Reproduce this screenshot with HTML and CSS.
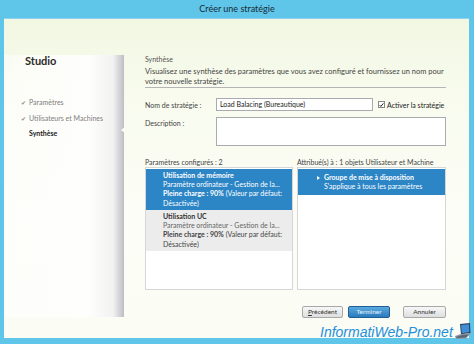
FILE: index.html
```html
<!DOCTYPE html>
<html lang="fr">
<head>
<meta charset="utf-8">
<title>Créer une stratégie</title>
<link rel="stylesheet" href="styles.css">
</head>
<body>
<div class="window">
  <div class="titlebar">Créer une stratégie</div>
  <div class="client">
    <aside class="sidebar">
      <div class="brand">Studio</div>
      <ul class="steps">
        <li class="step done"><span class="tick">✔</span>Paramètres</li>
        <li class="step done"><span class="tick">✔</span>Utilisateurs et Machines</li>
        <li class="step current">Synthèse</li>
      </ul>
    </aside>
    <main class="pane">
      <span class="notch"></span>
      <h1 class="pane-title">Synthèse</h1>
      <p class="intro">Visualisez une synthèse des paramètres que vous avez configuré et fournissez un nom pour votre nouvelle stratégie.</p>
      <div class="form">
        <div class="lbl lbl-mid">Nom de stratégie :</div>
        <div class="name-row">
          <div class="input">Load Balacing (Bureautique)</div>
          <div class="chk">
            <span class="box"><svg viewBox="0 0 8 8" width="6" height="6"><path d="M1 4.2 L3 6.3 L7 1.4" fill="none" stroke="#222" stroke-width="1.6"/></svg></span>
            <span>Activer la stratégie</span>
          </div>
        </div>
        <div class="lbl lbl-top">Description :</div>
        <div class="textarea"></div>
      </div>
      <div class="lists">
        <section class="col">
          <div class="col-head">Paramètres configurés : 2</div>
          <div class="list">
            <div class="item sel">
              <div class="line b">Utilisation de mémoire</div>
              <div class="line sub">Paramètre ordinateur - Gestion de la...</div>
              <div class="line"><b>Pleine charge : 90%</b> (Valeur par défaut:</div>
              <div class="line">Désactivée)</div>
            </div>
            <div class="item alt">
              <div class="line b">Utilisation UC</div>
              <div class="line sub">Paramètre ordinateur - Gestion de la...</div>
              <div class="line"><b>Pleine charge : 90%</b> (Valeur par défaut:</div>
              <div class="line">Désactivée)</div>
            </div>
          </div>
        </section>
        <section class="col">
          <div class="col-head">Attribué(s) à : 1 objets Utilisateur et Machine</div>
          <div class="list">
            <div class="item sel target">
              <span class="arrow"></span>
              <div class="line b">Groupe de mise à disposition</div>
              <div class="line">S'applique à tous les paramètres</div>
            </div>
          </div>
        </section>
      </div>
      <div class="actions">
        <button class="btn btn-prev"><u>P</u>récédent</button>
        <button class="btn btn-primary">Terminer</button>
        <button class="btn btn-cancel">Annuler</button>
      </div>
    </main>
  </div>
  <div class="watermark">
    <span class="wm-text">InformatiWeb-Pro.net</span>
    <svg class="wm-icon" viewBox="0 0 18 18" width="18" height="18">
      <path d="M6 2 L16 1 L16.5 11 L7 12.5 Z" fill="#2c3e58"/>
      <path d="M7 3 L15 2.2 L15.4 10 L7.8 11.2 Z" fill="#3f8fd8"/>
      <path d="M1 14 L7 12 L17 11 L12 16.5 L2 17 Z" fill="#8c97a3"/>
      <path d="M2 15 L7.5 13.2 L15 12.4 L11.5 15.6 L3 16 Z" fill="#5a6573"/>
    </svg>
  </div>
</div>
</body>
</html>
```

FILE: styles.css
```css
* { box-sizing: border-box; margin: 0; padding: 0; }

html, body {
  width: 474px;
  height: 344px;
  overflow: hidden;
}

body {
  font-family: Lato, "Open Sans", "Liberation Sans", sans-serif;
  background: #5fc6ea;
  color: #333;
}

.window {
  position: relative;
  width: 474px;
  height: 344px;
  display: flex;
  flex-direction: column;
  background: #5fc6ea;
}

.titlebar {
  height: 18px;
  line-height: 18px;
  text-align: center;
  font-size: 9px;
  color: #1a2a35;
}

.client {
  margin: 0 5px 0 4px;
  height: 320px;
  display: flex;
  background: linear-gradient(to bottom, #f2f7e2 0%, #f8fbee 25%, #fcfdf6 60%, #fbfcf4 100%);
  border-top: 1px solid #8fd3ee;
}

.sidebar {
  width: 120px;
  margin-top: 36px;
  height: 262px;
  padding-left: 21px;
  background: linear-gradient(to right, rgba(255,255,255,0.5) 0%, #fefefc 70%, #f2f2f2 91%, #cfcfd4 97%, #bdbdc3 100%);
}

.brand {
  font-size: 11px;
  line-height: 12px;
  font-weight: 700;
  color: #2b2b2b;
}

.steps {
  list-style: none;
  margin-top: 28px;
  padding-left: 8px;
  margin-left: -4px;
}

.step {
  font-size: 7px;
  line-height: 14.5px;
  color: #7d7d7d;
  white-space: nowrap;
}

.tick {
  display: inline-block;
  width: 8px;
  margin-left: -8px;
  font-size: 6px;
  color: #8a8a8a;
}

.current {
  font-weight: 700;
  color: #222;
}

.pane {
  position: relative;
  flex: 1;
  padding: 35px 23px 0 21px;
  display: flex;
  flex-direction: column;
}

.notch {
  position: absolute;
  left: -3px;
  top: 108px;
  width: 0;
  height: 0;
  border-top: 3px solid transparent;
  border-bottom: 3px solid transparent;
  border-right: 4px solid #fdfdf8;
}

.pane-title {
  font-size: 7px;
  line-height: 10px;
  font-weight: 400;
  color: #555;
}

.intro {
  margin-top: 3px;
  font-size: 7.5px;
  line-height: 10px;
  color: #444;
  border-bottom: 1px solid #b5b5b5;
  padding-bottom: 0;
}

.form {
  margin-top: 10px;
  display: grid;
  grid-template-columns: 71px 1fr;
  row-gap: 6px;
  font-size: 7px;
}

.lbl { color: #444; line-height: 10px; }
.lbl-mid { align-self: center; }
.lbl-top { align-self: start; padding-top: 1px; }

.name-row {
  display: flex;
  align-items: center;
  gap: 5px;
}

.input {
  width: 157px;
  height: 13px;
  border: 1px solid #a9abb1;
  background: #fff;
  padding-left: 3px;
  line-height: 11px;
  color: #222;
}

.chk {
  display: flex;
  align-items: center;
  gap: 2px;
  color: #222;
  white-space: nowrap;
}

.box {
  width: 7px;
  height: 7px;
  border: 1px solid #8a8a8a;
  background: #fff;
  display: flex;
  align-items: center;
  justify-content: center;
}

.textarea {
  height: 29px;
  border: 1px solid #a9abb1;
  background: #fff;
}

.lists {
  margin-top: 11px;
  display: grid;
  grid-template-columns: 148px 149px;
  column-gap: 4px;
  font-size: 7px;
}

.col-head {
  line-height: 10px;
  color: #444;
  white-space: nowrap;
}

.list {
  height: 123px;
  border: 1px solid #d6d6d6;
  background: #fff;
  padding: 1px 0;
}

.item {
  position: relative;
  padding: 2px 3px 2px 17px;
  height: 41px;
  color: #444;
}

.line {
  line-height: 9.2px;
  white-space: nowrap;
  overflow: hidden;
}

.line.b, .item b { font-weight: 700; }
.line.b { color: #333; }
.alt { background: #ececec; }
.alt .sub { color: #666; }

.sel {
  background: #2c86c6;
  color: #fff;
}
.sel .line.b { color: #fff; }

.target {
  height: 26px;
  padding: 4px 3px 3px 26px;
}

.arrow {
  position: absolute;
  left: 19px;
  top: 7px;
  width: 0;
  height: 0;
  border-top: 2.5px solid transparent;
  border-bottom: 2.5px solid transparent;
  border-left: 3px solid #fff;
}

.actions {
  margin-top: 16px;
  display: flex;
  justify-content: flex-end;
}

.btn {
  height: 12px;
  font-family: inherit;
  font-size: 6.5px;
  line-height: 10px;
  border: 1px solid #a8a8a8;
  border-radius: 2px;
  background: linear-gradient(to bottom, #f7f7f7, #dedede);
  color: #333;
}

.btn u { text-decoration: underline; }
.btn-prev { width: 41px; }
.btn-primary {
  width: 42px;
  margin-left: 5px;
  background: linear-gradient(to bottom, #5aa9de, #2b7bbd);
  border-color: #1f5d95;
  color: #e8f2fb;
}
.btn-cancel { width: 43px; margin-left: 13px; }

.watermark {
  position: absolute;
  left: 320px;
  top: 322px;
  display: flex;
  align-items: flex-end;
  gap: 1px;
}

.wm-text {
  font-family: "Liberation Sans", Arial, sans-serif;
  font-style: italic;
  font-size: 14px;
  line-height: 16px;
  color: #1f8fdc;
}

.wm-icon { display: block; }
```
